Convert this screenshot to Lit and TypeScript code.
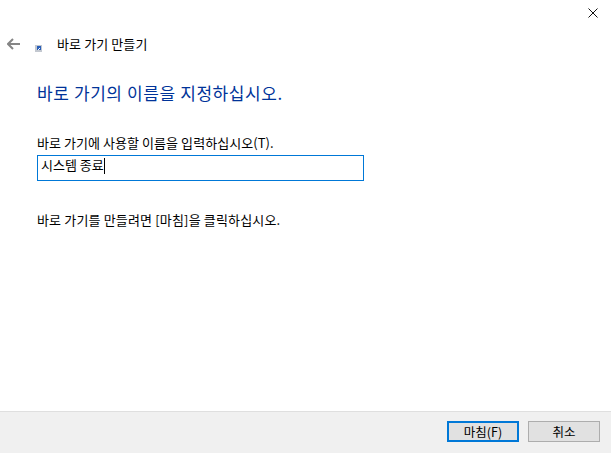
import { LitElement, html, css } from "lit";
import { customElement } from "lit/decorators.js";

@customElement("app-root")
export class AppRoot extends LitElement {
  static styles = css`
    :host {
      display: flex;
      flex-direction: column;
      width: 611px;
      height: 453px;
      background: #fff;
      font-family: "Noto Sans CJK KR", "Liberation Sans", sans-serif;
      font-size: 13px;
      color: #000;
      overflow: hidden;
    }
    .top { display: flex; justify-content: flex-end; height: 8px; padding: 8px 13px 0 0; }
    .close { width: 10px; height: 10px; display: block; }
    .nav { display: flex; align-items: center; height: 20px; margin-top: 18px; padding-left: 7px; }
    .back { width: 13px; height: 12px; display: block; }
    .app { width: 7px; height: 7px; display: block; margin-left: 15px; margin-top: 8px; }
    .navtitle { margin-left: 15px; line-height: 20px; letter-spacing: 0.1px; }
    .main { flex: 1; display: flex; flex-direction: column; padding: 28px 0 0 37px; }
    h1 { margin: 0; font-size: 17px; font-weight: 400; line-height: 22px; color: #003399; letter-spacing: 0.6px; }
    .label { margin-top: 30px; line-height: 18px; letter-spacing: 0.06px; }
    .field {
      box-sizing: border-box; width: 327px; height: 26px; margin-top: 3px;
      border: 1px solid #0078d7; display: flex; align-items: flex-start; padding: 1px 0 0 3px;
      line-height: 16px;
    }
    .caret { width: 1px; height: 16px; margin-top: 1px; background: #000; }
    .hint { margin-top: 30px; line-height: 18px; letter-spacing: 0.16px; }
    .footer {
      box-sizing: border-box; height: 42px; background: #f0f0f0; border-top: 1px solid #dfdfdf;
      display: flex; justify-content: flex-end; gap: 9px; padding: 9px 11px 0 0;
    }
    .btn {
      box-sizing: border-box; height: 21px; background: #e1e1e1; border: 1px solid #adadad;
      font: inherit; font-size: 12.5px; color: #000; padding: 0; line-height: 17px;
      display: flex; align-items: center; justify-content: center;
    }
    .primary { width: 72px; border: 2px solid #0078d7; }
    .cancel { width: 72px; }
  `;

  render() {
    return html`
      <div class="top">
        <svg class="close" viewBox="0 0 10 10"><path d="M0.5 0.5 L9.5 9.5 M9.5 0.5 L0.5 9.5" stroke="#111" stroke-width="1" fill="none"/></svg>
      </div>
      <div class="nav">
        <svg class="back" viewBox="0 0 13 12"><path d="M1 6 H13 M6 1 L1 6 L6 11" stroke="#858585" stroke-width="2" fill="none"/></svg>
        <svg class="app" viewBox="0 0 7 7"><rect width="7" height="7" fill="#c3c8d0"/><rect x="2" y="1" width="4" height="4" fill="#2a5fb8"/><path d="M3 5 L5 3" stroke="#fff" stroke-width="1"/></svg>
        <span class="navtitle">바로 가기 만들기</span>
      </div>
      <div class="main">
        <h1>바로 가기의 이름을 지정하십시오.</h1>
        <div class="label">바로 가기에 사용할 이름을 입력하십시오(T).</div>
        <div class="field"><span>시스템 종료</span><span class="caret"></span></div>
        <div class="hint">바로 가기를 만들려면 [마침]을 클릭하십시오.</div>
      </div>
      <div class="footer">
        <button class="btn primary">마침(F)</button>
        <button class="btn cancel">취소</button>
      </div>
    `;
  }
}
